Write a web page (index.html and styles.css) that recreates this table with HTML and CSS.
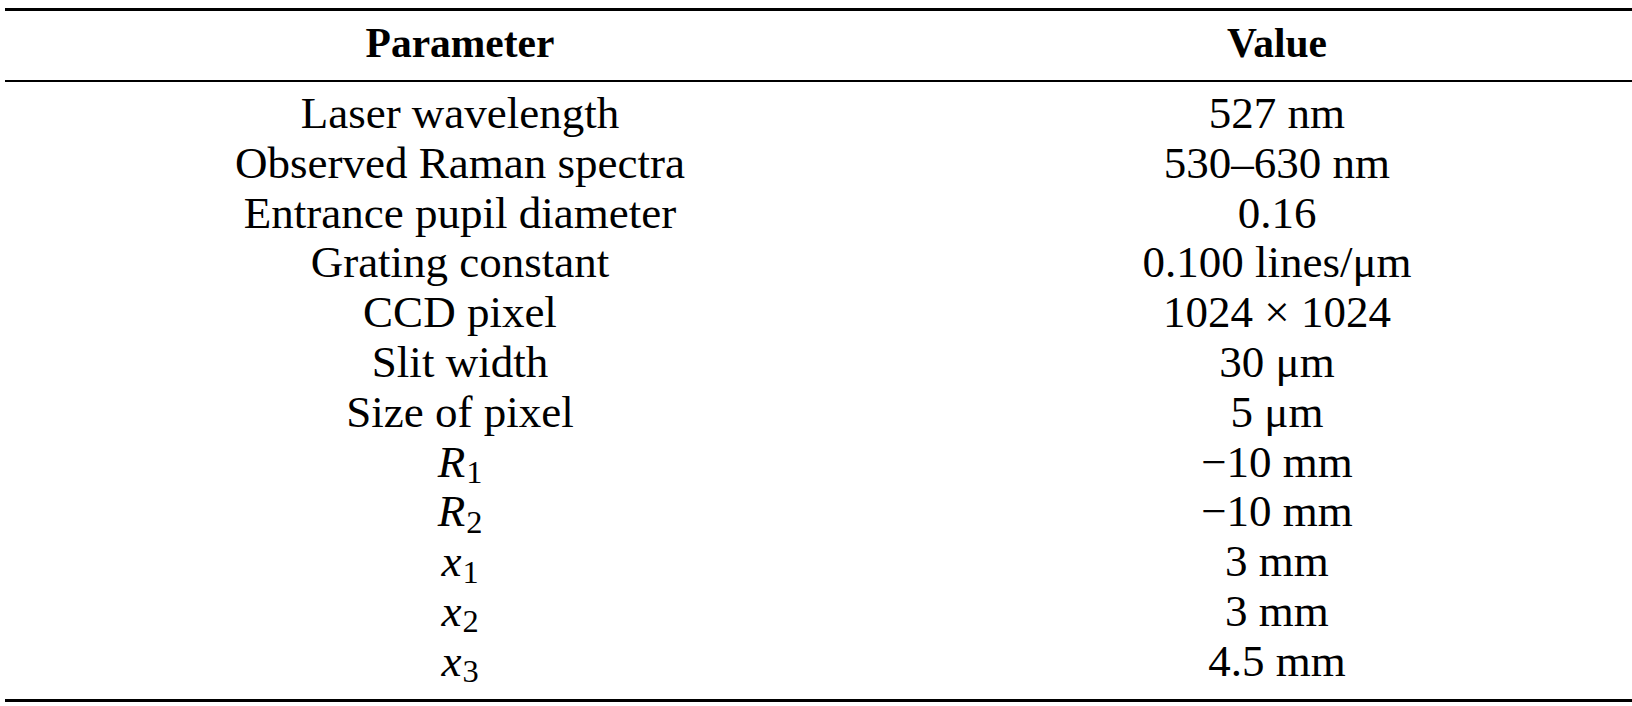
FILE: index.html
```html
<!DOCTYPE html>
<html lang="en">
<head>
<meta charset="utf-8">
<title>Parameters</title>
<link rel="stylesheet" href="styles.css">
</head>
<body>
<table class="params">
  <colgroup>
    <col class="col-param">
    <col class="col-value">
  </colgroup>
  <thead>
    <tr><th>Parameter</th><th>Value</th></tr>
  </thead>
  <tbody>
    <tr class="first"><td>Laser wavelength</td><td>527 nm</td></tr>
    <tr><td>Observed Raman spectra</td><td>530–630 nm</td></tr>
    <tr><td>Entrance pupil diameter</td><td>0.16</td></tr>
    <tr><td>Grating constant</td><td>0.100 lines/μm</td></tr>
    <tr><td>CCD pixel</td><td>1024 × 1024</td></tr>
    <tr><td>Slit width</td><td>30 μm</td></tr>
    <tr><td>Size of pixel</td><td>5 μm</td></tr>
    <tr><td><i class="var">R</i><sub class="idx">1</sub></td><td>−10 mm</td></tr>
    <tr><td><i class="var">R</i><sub class="idx">2</sub></td><td>−10 mm</td></tr>
    <tr><td><i class="var">x</i><sub class="idx">1</sub></td><td>3 mm</td></tr>
    <tr><td><i class="var">x</i><sub class="idx">2</sub></td><td>3 mm</td></tr>
    <tr class="last"><td><i class="var">x</i><sub class="idx">3</sub></td><td>4.5 mm</td></tr>
  </tbody>
</table>
</body>
</html>
```
FILE: styles.css
```css
html, body {
  margin: 0;
  padding: 0;
  background: #ffffff;
  overflow: hidden;
}

body {
  width: 1632px;
  height: 706px;
  font-family: "Liberation Serif", "Times New Roman", serif;
  color: #000000;
}

.params {
  margin: 8px 0 0 5px;
  width: 1634px;
  table-layout: fixed;
  border-collapse: separate;
  border-spacing: 0;
  border-top: 3px solid #000;
  border-bottom: 3px solid #000;
}

.col-param { width: 910px; }
.col-value { width: 724px; }

.params th {
  font-weight: bold;
  font-size: 41.5px;
  line-height: 46px;
  padding: 9px 0 14px 0;
  text-align: center;
  border-bottom: 2px solid #000;
}

.params td {
  font-size: 45px;
  line-height: 49.8px;
  padding: 0;
  text-align: center;
  white-space: nowrap;
}

.params tr.first td { padding-top: 7px; }
.params tr.last td { padding-bottom: 12.4px; }

.var {
  font-style: italic;
}

.idx {
  font-size: 0.72em;
  line-height: 0;
  vertical-align: -0.2em;
  margin-left: 1px;
}
```
